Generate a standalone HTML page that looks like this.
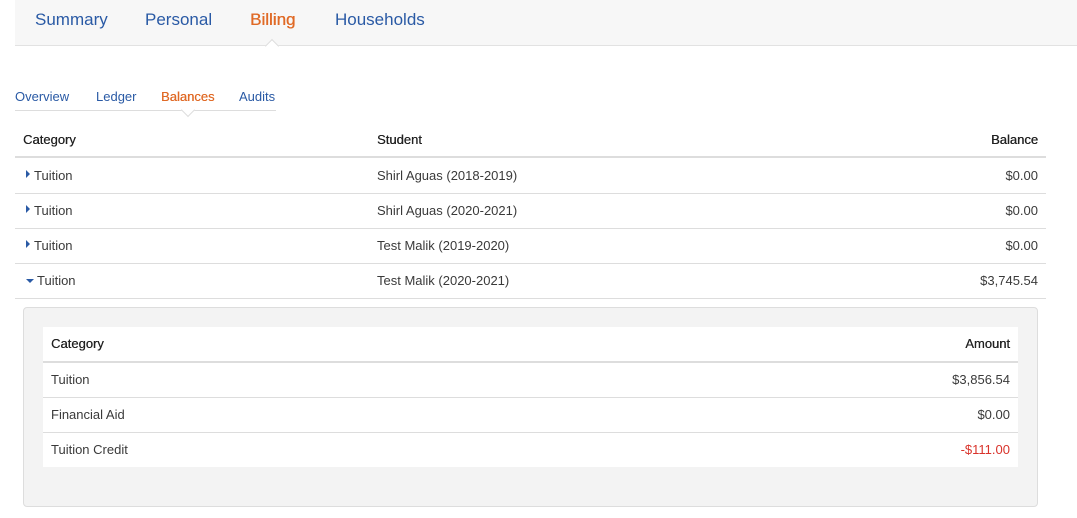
<!DOCTYPE html>
<html><head><style>
*{margin:0;padding:0;box-sizing:border-box}
body{width:1077px;height:518px;background:#fff;font-family:"Liberation Sans",sans-serif;color:#3a3a3a;position:relative;overflow:hidden}
.top{position:absolute;left:15px;top:0;width:1062px;height:46px;background:#f7f7f7;border-bottom:1px solid #e2e2e2}
.top span{position:absolute;top:10px;font-size:17px;color:#2a5aa5}
.arrow{position:absolute;width:10px;height:10px;background:#fff;border-left:1px solid #ddd;border-top:1px solid #ddd;transform:rotate(45deg)}
.sub span{position:absolute;top:89px;font-size:13px;color:#2a5aa5}
.subline{position:absolute;left:15px;top:110px;width:261px;border-top:1px solid #ddd}
.t{position:absolute;font-size:13px}
.h{color:#222;text-shadow:0.3px 0 0 #222}
.hl{position:absolute;border-top:1px solid #ddd}
.tri{position:absolute;width:0;height:0}
</style></head><body>
<div class="top">
<span style="left:20px">Summary</span>
<span style="left:130px">Personal</span>
<span style="left:235px;color:#e06a26;text-shadow:0.4px 0 0 #e06a26">Billing</span>
<span style="left:320px">Households</span>
</div>
<div class="arrow" style="left:267px;top:41px;background:#fff"></div>
<div class="sub">
<span style="left:15px">Overview</span>
<span style="left:96px">Ledger</span>
<span style="left:161px;color:#e06a26;text-shadow:0.3px 0 0 #e06a26">Balances</span>
<span style="left:239px">Audits</span>
</div>
<div class="subline"></div>
<div class="arrow" style="left:183px;top:105px;transform:rotate(225deg)"></div>

<div class="t h" style="left:23px;top:132px">Category</div>
<div class="t h" style="left:377px;top:132px">Student</div>
<div class="t h" style="right:39px;top:132px">Balance</div>
<div class="hl" style="left:15px;width:1031px;top:156px;border-top:2px solid #ddd"></div>

<div class="tri" style="left:26px;top:170px;border-left:4px solid #2a5aa5;border-top:4.5px solid transparent;border-bottom:4.5px solid transparent"></div>
<div class="t" style="left:34px;top:168px">Tuition</div><div class="t" style="left:377px;top:168px">Shirl Aguas (2018-2019)</div><div class="t" style="right:39px;top:168px">$0.00</div>
<div class="hl" style="left:15px;width:1031px;top:193px"></div>
<div class="tri" style="left:26px;top:205px;border-left:4px solid #2a5aa5;border-top:4.5px solid transparent;border-bottom:4.5px solid transparent"></div>
<div class="t" style="left:34px;top:203px">Tuition</div><div class="t" style="left:377px;top:203px">Shirl Aguas (2020-2021)</div><div class="t" style="right:39px;top:203px">$0.00</div>
<div class="hl" style="left:15px;width:1031px;top:228px"></div>
<div class="tri" style="left:26px;top:240px;border-left:4px solid #2a5aa5;border-top:4.5px solid transparent;border-bottom:4.5px solid transparent"></div>
<div class="t" style="left:34px;top:238px">Tuition</div><div class="t" style="left:377px;top:238px">Test Malik (2019-2020)</div><div class="t" style="right:39px;top:238px">$0.00</div>
<div class="hl" style="left:15px;width:1031px;top:263px"></div>
<div class="tri" style="left:26px;top:279px;border-top:4px solid #2a5aa5;border-left:4.5px solid transparent;border-right:4.5px solid transparent"></div>
<div class="t" style="left:37px;top:273px">Tuition</div><div class="t" style="left:377px;top:273px">Test Malik (2020-2021)</div><div class="t" style="right:39px;top:273px">$3,745.54</div>
<div class="hl" style="left:15px;width:1031px;top:298px"></div>

<div style="position:absolute;left:23px;top:307px;width:1015px;height:200px;background:#f3f3f3;border:1px solid #ddd;border-radius:4px"></div>
<div style="position:absolute;left:43px;top:327px;width:975px;height:140px;background:#fff"></div>
<div class="t h" style="left:51px;top:336px">Category</div>
<div class="t h" style="right:67px;top:336px">Amount</div>
<div class="hl" style="left:43px;width:975px;top:361px;border-top:2px solid #ddd"></div>
<div class="t" style="left:51px;top:372px">Tuition</div><div class="t" style="right:67px;top:372px">$3,856.54</div>
<div class="hl" style="left:43px;width:975px;top:397px"></div>
<div class="t" style="left:51px;top:407px">Financial Aid</div><div class="t" style="right:67px;top:407px">$0.00</div>
<div class="hl" style="left:43px;width:975px;top:432px"></div>
<div class="t" style="left:51px;top:442px">Tuition Credit</div><div class="t" style="right:67px;top:442px;color:#d9332b">-$111.00</div>
</body></html>
